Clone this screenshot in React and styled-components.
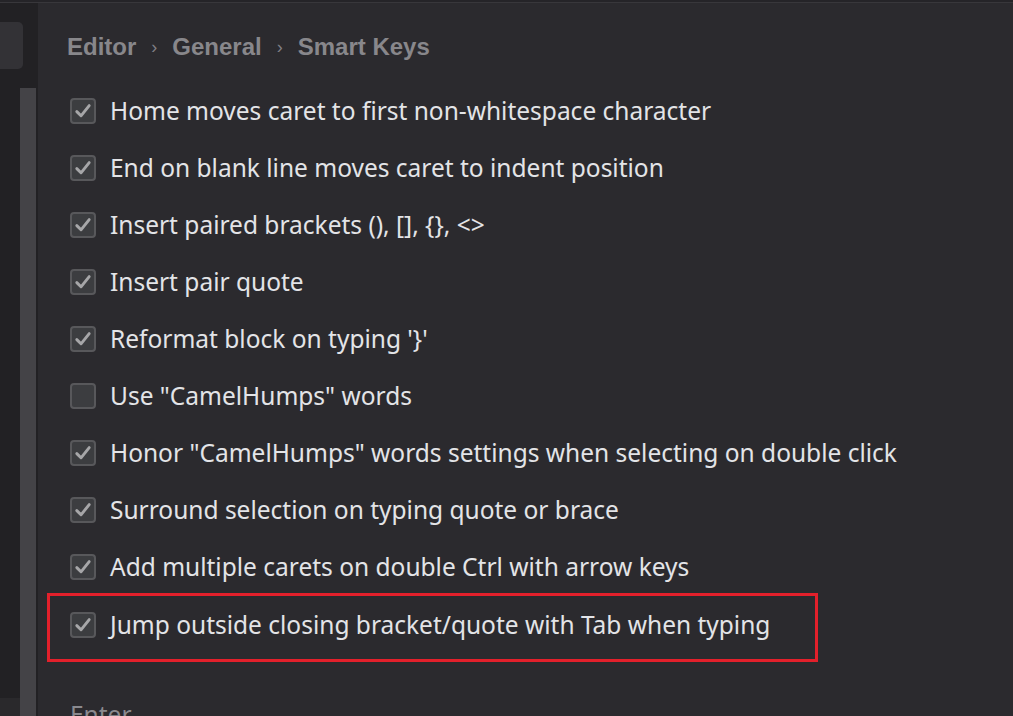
import React from "react";
import styled, { createGlobalStyle } from "styled-components";

const Global = createGlobalStyle`
  html, body { margin: 0; padding: 0; background: #2b2a2e; }
  body { width: 1013px; height: 716px; overflow: hidden; }
  #root { height: 716px; }
`;

const Frame = styled.div`
  display: flex;
  flex-direction: column;
  height: 716px;
  border-top: 2px solid #252428;
  box-sizing: border-box;
`;

const TopLine = styled.div`
  height: 1px;
  background: #38373b;
`;

const Body = styled.div`
  flex: 1;
  display: flex;
  min-height: 0;
`;

const Sidebar = styled.div`
  width: 38px;
  flex: none;
  background: #222124;
  display: grid;
  grid-template-columns: 20px 16px 2px;
  grid-template-rows: 19px 47px 19px 1fr 18px;
`;

const SelectedItem = styled.div`
  grid-column: 1 / 3;
  grid-row: 2;
  width: 23px;
  background: #333236;
  border-radius: 0 5px 5px 0;
`;

const ScrollTrack = styled.div`
  grid-column: 2;
  grid-row: 4 / 6;
  background: #444347;
`;

const SidebarFoot = styled.div`
  grid-column: 1;
  grid-row: 5;
  background: #2a292c;
`;

const Main = styled.div`
  flex: 1;
  background: #2b2a2e;
  padding: 29px 0 0 29px;
  font-family: "Noto Sans", "Open Sans", sans-serif;
  overflow: hidden;
`;

const Breadcrumb = styled.div`
  display: flex;
  align-items: center;
  gap: 15px;
  height: 30px;
  font-family: "Liberation Sans", Arial, sans-serif;
  font-weight: 700;
  font-size: 24px;
  color: #88878b;
  margin-bottom: 20px;
`;

const Sep = styled.span`
  font-weight: 400;
  font-size: 18px;
  color: #807f84;
`;

const List = styled.div`
  display: flex;
  flex-direction: column;
  padding-left: 3px;
`;

const Row = styled.label`
  display: flex;
  align-items: center;
  height: 57px;
  flex: none;
  gap: 14px;
  color: #e3e4e7;
  font-size: 24.5px;
  white-space: nowrap;
`;

const Box = styled.span`
  width: 26px;
  height: 26px;
  box-sizing: border-box;
  flex: none;
  border: 2px solid #58585b;
  border-radius: 4px;
  background: #3c3d40;
  display: flex;
  align-items: center;
  justify-content: center;
`;

const Highlight = styled.div`
  margin-left: -23px;
  margin-top: -2px;
  width: 771px;
  height: 69px;
  flex: none;
  box-sizing: border-box;
  border: 3px solid #e3202b;
  padding-left: 20px;
  display: flex;
  align-items: flex-start;
`;

const SectionTitle = styled.div`
  margin-top: 38px;
  font-size: 24.5px;
  line-height: 30px;
  color: #8a898e;
  white-space: nowrap;
`;

const Check = () => (
  <svg width="18" height="18" viewBox="0 0 18 18">
    <path d="M2.8 9.6 L7.0 13.8 L15.2 3.6" fill="none" stroke="#a6a6a8" strokeWidth="2.9" strokeLinecap="round" strokeLinejoin="round" />
  </svg>
);

const Option = ({ checked, children }) => (
  <Row>
    <Box>{checked && <Check />}</Box>
    <span>{children}</span>
  </Row>
);

const items = [
  ["Home moves caret to first non-whitespace character", true],
  ["End on blank line moves caret to indent position", true],
  ["Insert paired brackets (), [], {}, <>", true],
  ["Insert pair quote", true],
  ["Reformat block on typing '}'", true],
  ['Use "CamelHumps" words', false],
  ['Honor "CamelHumps" words settings when selecting on double click', true],
  ["Surround selection on typing quote or brace", true],
  ["Add multiple carets on double Ctrl with arrow keys", true],
];

export default function App() {
  return (
    <>
      <Global />
      <Frame>
        <TopLine />
        <Body>
          <Sidebar>
            <SelectedItem />
            <ScrollTrack />
            <SidebarFoot />
          </Sidebar>
          <Main>
            <Breadcrumb>
              <span>Editor</span>
              <Sep>›</Sep>
              <span>General</span>
              <Sep>›</Sep>
              <span>Smart Keys</span>
            </Breadcrumb>
            <List>
              {items.map(([t, c]) => (
                <Option key={t} checked={c}>{t}</Option>
              ))}
              <Highlight>
                <Option checked>Jump outside closing bracket/quote with Tab when typing</Option>
              </Highlight>
              <SectionTitle>Enter</SectionTitle>
            </List>
          </Main>
        </Body>
      </Frame>
    </>
  );
}
